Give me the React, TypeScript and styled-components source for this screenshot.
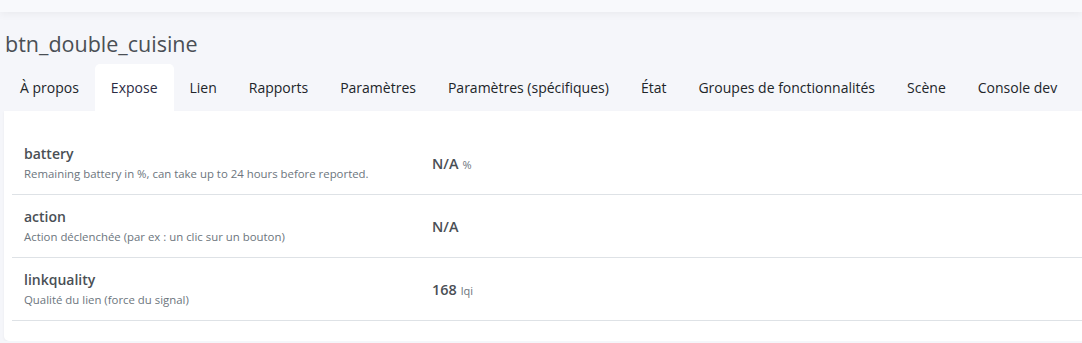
import React from 'react';
import styled, {createGlobalStyle} from 'styled-components';

const GlobalStyle = createGlobalStyle`
  html, body {
    margin: 0;
    padding: 0;
    background: #f5f6fa;
    font-family: 'Open Sans', 'Noto Sans', sans-serif;
    color: #212529;
    overflow: hidden;
  }
  * {
    box-sizing: border-box;
  }
`;

const TopBar = styled.div`
  height: 12px;
  background: #f8f9fc;
  box-shadow: 0 2px 8px rgba(0, 0, 0, 0.05);
`;

const Page = styled.div`
  padding: 0 0 0 4px;
`;

const Title = styled.h1`
  margin: 17px 0 5px 1px;
  font-size: 21.5px;
  font-weight: 500;
  line-height: 30px;
  color: #4a4f55;
`;

const TabBar = styled.nav`
  display: flex;
`;

const Tab = styled.div<{$active?: boolean}>`
  padding: 12px 16px;
  font-size: 14px;
  line-height: 23px;
  white-space: nowrap;
  color: ${(p) => (p.$active ? '#2b2b44' : '#212529')};
  background: ${(p) => (p.$active ? '#ffffff' : 'transparent')};
  border-radius: 5px 5px 0 0;
`;

const Card = styled.div`
  background: #ffffff;
  border-radius: 0 0 5px 5px;
  box-shadow: 0 1px 3px rgba(0, 0, 0, 0.05);
  padding: 21px 0 20px 8px;
  margin-right: -20px;
`;

const Table = styled.div`
  display: flex;
  flex-direction: column;
`;

const Row = styled.div`
  display: grid;
  grid-template-columns: 408px 1fr;
  align-items: center;
  border-bottom: 1px solid #dee2e6;
`;

const Info = styled.div`
  padding: 11px 12px;
`;

const Name = styled.div`
  font-size: 14px;
  font-weight: 600;
  line-height: 22px;
  color: #4a4f55;
`;

const Description = styled.div`
  font-size: 11.4px;
  line-height: 18px;
  color: #6c757d;
`;

const Value = styled.div`
  padding: 0 12px;
  font-size: 14.4px;
  font-weight: 600;
  color: #4a4f55;
`;

const Unit = styled.span`
  margin-left: 4px;
  font-size: 11px;
  font-weight: 400;
  color: #6c757d;
`;

const tabs = [
  'À propos',
  'Expose',
  'Lien',
  'Rapports',
  'Paramètres',
  'Paramètres (spécifiques)',
  'État',
  'Groupes de fonctionnalités',
  'Scène',
  'Console dev',
];

const exposes = [
  {
    name: 'battery',
    description: 'Remaining battery in %, can take up to 24 hours before reported.',
    value: 'N/A',
    unit: '%',
  },
  {
    name: 'action',
    description: 'Action déclenchée (par ex : un clic sur un bouton)',
    value: 'N/A',
  },
  {
    name: 'linkquality',
    description: 'Qualité du lien (force du signal)',
    value: '168',
    unit: 'lqi',
  },
];

const App = () => {
  return (
    <>
      <GlobalStyle />
      <TopBar />
      <Page>
        <Title>btn_double_cuisine</Title>
        <TabBar>
          {tabs.map((t) => (
            <Tab key={t} $active={t === 'Expose'}>
              {t}
            </Tab>
          ))}
        </TabBar>
        <Card>
          <Table>
            {exposes.map((e) => (
              <Row key={e.name}>
                <Info>
                  <Name>{e.name}</Name>
                  <Description>{e.description}</Description>
                </Info>
                <Value>
                  {e.value}
                  {e.unit && <Unit>{e.unit}</Unit>}
                </Value>
              </Row>
            ))}
          </Table>
        </Card>
      </Page>
    </>
  );
};

export default App;
